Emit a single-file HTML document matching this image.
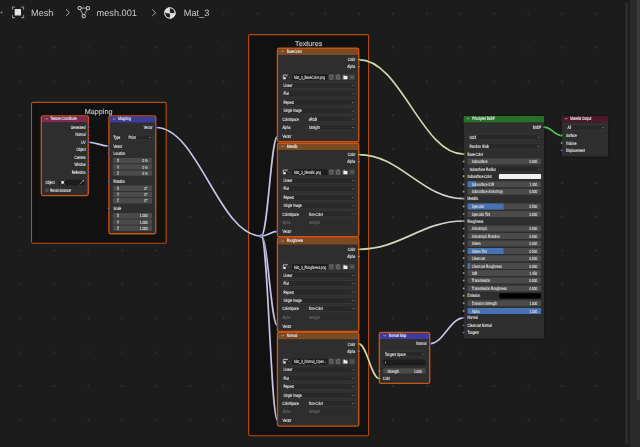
<!DOCTYPE html><html><head><meta charset="utf-8"><style>html,body{margin:0;padding:0;background:#1c1c1c;overflow:hidden}svg{display:block;font-family:"Liberation Sans",sans-serif;text-rendering:geometricPrecision;will-change:transform;filter:blur(0.35px)}</style></head><body><svg width="640" height="447" viewBox="0 0 640 447">
<rect x="0" y="0" width="640" height="447" fill="#1c1c1c"/>
<rect x="19.7" y="12.8" width="2" height="2" fill="#2c2c2c"/>
<rect x="19.7" y="46.64" width="2" height="2" fill="#2c2c2c"/>
<rect x="19.7" y="80.48" width="2" height="2" fill="#2c2c2c"/>
<rect x="19.7" y="114.32" width="2" height="2" fill="#2c2c2c"/>
<rect x="19.7" y="148.16" width="2" height="2" fill="#2c2c2c"/>
<rect x="19.7" y="182" width="2" height="2" fill="#2c2c2c"/>
<rect x="19.7" y="215.84" width="2" height="2" fill="#2c2c2c"/>
<rect x="19.7" y="249.68" width="2" height="2" fill="#2c2c2c"/>
<rect x="19.7" y="283.52" width="2" height="2" fill="#2c2c2c"/>
<rect x="19.7" y="317.36" width="2" height="2" fill="#2c2c2c"/>
<rect x="19.7" y="351.2" width="2" height="2" fill="#2c2c2c"/>
<rect x="19.7" y="385.04" width="2" height="2" fill="#2c2c2c"/>
<rect x="19.7" y="418.88" width="2" height="2" fill="#2c2c2c"/>
<rect x="53.54" y="12.8" width="2" height="2" fill="#2c2c2c"/>
<rect x="53.54" y="46.64" width="2" height="2" fill="#2c2c2c"/>
<rect x="53.54" y="80.48" width="2" height="2" fill="#2c2c2c"/>
<rect x="53.54" y="114.32" width="2" height="2" fill="#2c2c2c"/>
<rect x="53.54" y="148.16" width="2" height="2" fill="#2c2c2c"/>
<rect x="53.54" y="182" width="2" height="2" fill="#2c2c2c"/>
<rect x="53.54" y="215.84" width="2" height="2" fill="#2c2c2c"/>
<rect x="53.54" y="249.68" width="2" height="2" fill="#2c2c2c"/>
<rect x="53.54" y="283.52" width="2" height="2" fill="#2c2c2c"/>
<rect x="53.54" y="317.36" width="2" height="2" fill="#2c2c2c"/>
<rect x="53.54" y="351.2" width="2" height="2" fill="#2c2c2c"/>
<rect x="53.54" y="385.04" width="2" height="2" fill="#2c2c2c"/>
<rect x="53.54" y="418.88" width="2" height="2" fill="#2c2c2c"/>
<rect x="87.38" y="12.8" width="2" height="2" fill="#2c2c2c"/>
<rect x="87.38" y="46.64" width="2" height="2" fill="#2c2c2c"/>
<rect x="87.38" y="80.48" width="2" height="2" fill="#2c2c2c"/>
<rect x="87.38" y="114.32" width="2" height="2" fill="#2c2c2c"/>
<rect x="87.38" y="148.16" width="2" height="2" fill="#2c2c2c"/>
<rect x="87.38" y="182" width="2" height="2" fill="#2c2c2c"/>
<rect x="87.38" y="215.84" width="2" height="2" fill="#2c2c2c"/>
<rect x="87.38" y="249.68" width="2" height="2" fill="#2c2c2c"/>
<rect x="87.38" y="283.52" width="2" height="2" fill="#2c2c2c"/>
<rect x="87.38" y="317.36" width="2" height="2" fill="#2c2c2c"/>
<rect x="87.38" y="351.2" width="2" height="2" fill="#2c2c2c"/>
<rect x="87.38" y="385.04" width="2" height="2" fill="#2c2c2c"/>
<rect x="87.38" y="418.88" width="2" height="2" fill="#2c2c2c"/>
<rect x="121.22" y="12.8" width="2" height="2" fill="#2c2c2c"/>
<rect x="121.22" y="46.64" width="2" height="2" fill="#2c2c2c"/>
<rect x="121.22" y="80.48" width="2" height="2" fill="#2c2c2c"/>
<rect x="121.22" y="114.32" width="2" height="2" fill="#2c2c2c"/>
<rect x="121.22" y="148.16" width="2" height="2" fill="#2c2c2c"/>
<rect x="121.22" y="182" width="2" height="2" fill="#2c2c2c"/>
<rect x="121.22" y="215.84" width="2" height="2" fill="#2c2c2c"/>
<rect x="121.22" y="249.68" width="2" height="2" fill="#2c2c2c"/>
<rect x="121.22" y="283.52" width="2" height="2" fill="#2c2c2c"/>
<rect x="121.22" y="317.36" width="2" height="2" fill="#2c2c2c"/>
<rect x="121.22" y="351.2" width="2" height="2" fill="#2c2c2c"/>
<rect x="121.22" y="385.04" width="2" height="2" fill="#2c2c2c"/>
<rect x="121.22" y="418.88" width="2" height="2" fill="#2c2c2c"/>
<rect x="155.06" y="12.8" width="2" height="2" fill="#2c2c2c"/>
<rect x="155.06" y="46.64" width="2" height="2" fill="#2c2c2c"/>
<rect x="155.06" y="80.48" width="2" height="2" fill="#2c2c2c"/>
<rect x="155.06" y="114.32" width="2" height="2" fill="#2c2c2c"/>
<rect x="155.06" y="148.16" width="2" height="2" fill="#2c2c2c"/>
<rect x="155.06" y="182" width="2" height="2" fill="#2c2c2c"/>
<rect x="155.06" y="215.84" width="2" height="2" fill="#2c2c2c"/>
<rect x="155.06" y="249.68" width="2" height="2" fill="#2c2c2c"/>
<rect x="155.06" y="283.52" width="2" height="2" fill="#2c2c2c"/>
<rect x="155.06" y="317.36" width="2" height="2" fill="#2c2c2c"/>
<rect x="155.06" y="351.2" width="2" height="2" fill="#2c2c2c"/>
<rect x="155.06" y="385.04" width="2" height="2" fill="#2c2c2c"/>
<rect x="155.06" y="418.88" width="2" height="2" fill="#2c2c2c"/>
<rect x="188.9" y="12.8" width="2" height="2" fill="#2c2c2c"/>
<rect x="188.9" y="46.64" width="2" height="2" fill="#2c2c2c"/>
<rect x="188.9" y="80.48" width="2" height="2" fill="#2c2c2c"/>
<rect x="188.9" y="114.32" width="2" height="2" fill="#2c2c2c"/>
<rect x="188.9" y="148.16" width="2" height="2" fill="#2c2c2c"/>
<rect x="188.9" y="182" width="2" height="2" fill="#2c2c2c"/>
<rect x="188.9" y="215.84" width="2" height="2" fill="#2c2c2c"/>
<rect x="188.9" y="249.68" width="2" height="2" fill="#2c2c2c"/>
<rect x="188.9" y="283.52" width="2" height="2" fill="#2c2c2c"/>
<rect x="188.9" y="317.36" width="2" height="2" fill="#2c2c2c"/>
<rect x="188.9" y="351.2" width="2" height="2" fill="#2c2c2c"/>
<rect x="188.9" y="385.04" width="2" height="2" fill="#2c2c2c"/>
<rect x="188.9" y="418.88" width="2" height="2" fill="#2c2c2c"/>
<rect x="222.74" y="12.8" width="2" height="2" fill="#2c2c2c"/>
<rect x="222.74" y="46.64" width="2" height="2" fill="#2c2c2c"/>
<rect x="222.74" y="80.48" width="2" height="2" fill="#2c2c2c"/>
<rect x="222.74" y="114.32" width="2" height="2" fill="#2c2c2c"/>
<rect x="222.74" y="148.16" width="2" height="2" fill="#2c2c2c"/>
<rect x="222.74" y="182" width="2" height="2" fill="#2c2c2c"/>
<rect x="222.74" y="215.84" width="2" height="2" fill="#2c2c2c"/>
<rect x="222.74" y="249.68" width="2" height="2" fill="#2c2c2c"/>
<rect x="222.74" y="283.52" width="2" height="2" fill="#2c2c2c"/>
<rect x="222.74" y="317.36" width="2" height="2" fill="#2c2c2c"/>
<rect x="222.74" y="351.2" width="2" height="2" fill="#2c2c2c"/>
<rect x="222.74" y="385.04" width="2" height="2" fill="#2c2c2c"/>
<rect x="222.74" y="418.88" width="2" height="2" fill="#2c2c2c"/>
<rect x="256.58" y="12.8" width="2" height="2" fill="#2c2c2c"/>
<rect x="256.58" y="46.64" width="2" height="2" fill="#2c2c2c"/>
<rect x="256.58" y="80.48" width="2" height="2" fill="#2c2c2c"/>
<rect x="256.58" y="114.32" width="2" height="2" fill="#2c2c2c"/>
<rect x="256.58" y="148.16" width="2" height="2" fill="#2c2c2c"/>
<rect x="256.58" y="182" width="2" height="2" fill="#2c2c2c"/>
<rect x="256.58" y="215.84" width="2" height="2" fill="#2c2c2c"/>
<rect x="256.58" y="249.68" width="2" height="2" fill="#2c2c2c"/>
<rect x="256.58" y="283.52" width="2" height="2" fill="#2c2c2c"/>
<rect x="256.58" y="317.36" width="2" height="2" fill="#2c2c2c"/>
<rect x="256.58" y="351.2" width="2" height="2" fill="#2c2c2c"/>
<rect x="256.58" y="385.04" width="2" height="2" fill="#2c2c2c"/>
<rect x="256.58" y="418.88" width="2" height="2" fill="#2c2c2c"/>
<rect x="290.42" y="12.8" width="2" height="2" fill="#2c2c2c"/>
<rect x="290.42" y="46.64" width="2" height="2" fill="#2c2c2c"/>
<rect x="290.42" y="80.48" width="2" height="2" fill="#2c2c2c"/>
<rect x="290.42" y="114.32" width="2" height="2" fill="#2c2c2c"/>
<rect x="290.42" y="148.16" width="2" height="2" fill="#2c2c2c"/>
<rect x="290.42" y="182" width="2" height="2" fill="#2c2c2c"/>
<rect x="290.42" y="215.84" width="2" height="2" fill="#2c2c2c"/>
<rect x="290.42" y="249.68" width="2" height="2" fill="#2c2c2c"/>
<rect x="290.42" y="283.52" width="2" height="2" fill="#2c2c2c"/>
<rect x="290.42" y="317.36" width="2" height="2" fill="#2c2c2c"/>
<rect x="290.42" y="351.2" width="2" height="2" fill="#2c2c2c"/>
<rect x="290.42" y="385.04" width="2" height="2" fill="#2c2c2c"/>
<rect x="290.42" y="418.88" width="2" height="2" fill="#2c2c2c"/>
<rect x="324.26" y="12.8" width="2" height="2" fill="#2c2c2c"/>
<rect x="324.26" y="46.64" width="2" height="2" fill="#2c2c2c"/>
<rect x="324.26" y="80.48" width="2" height="2" fill="#2c2c2c"/>
<rect x="324.26" y="114.32" width="2" height="2" fill="#2c2c2c"/>
<rect x="324.26" y="148.16" width="2" height="2" fill="#2c2c2c"/>
<rect x="324.26" y="182" width="2" height="2" fill="#2c2c2c"/>
<rect x="324.26" y="215.84" width="2" height="2" fill="#2c2c2c"/>
<rect x="324.26" y="249.68" width="2" height="2" fill="#2c2c2c"/>
<rect x="324.26" y="283.52" width="2" height="2" fill="#2c2c2c"/>
<rect x="324.26" y="317.36" width="2" height="2" fill="#2c2c2c"/>
<rect x="324.26" y="351.2" width="2" height="2" fill="#2c2c2c"/>
<rect x="324.26" y="385.04" width="2" height="2" fill="#2c2c2c"/>
<rect x="324.26" y="418.88" width="2" height="2" fill="#2c2c2c"/>
<rect x="358.1" y="12.8" width="2" height="2" fill="#2c2c2c"/>
<rect x="358.1" y="46.64" width="2" height="2" fill="#2c2c2c"/>
<rect x="358.1" y="80.48" width="2" height="2" fill="#2c2c2c"/>
<rect x="358.1" y="114.32" width="2" height="2" fill="#2c2c2c"/>
<rect x="358.1" y="148.16" width="2" height="2" fill="#2c2c2c"/>
<rect x="358.1" y="182" width="2" height="2" fill="#2c2c2c"/>
<rect x="358.1" y="215.84" width="2" height="2" fill="#2c2c2c"/>
<rect x="358.1" y="249.68" width="2" height="2" fill="#2c2c2c"/>
<rect x="358.1" y="283.52" width="2" height="2" fill="#2c2c2c"/>
<rect x="358.1" y="317.36" width="2" height="2" fill="#2c2c2c"/>
<rect x="358.1" y="351.2" width="2" height="2" fill="#2c2c2c"/>
<rect x="358.1" y="385.04" width="2" height="2" fill="#2c2c2c"/>
<rect x="358.1" y="418.88" width="2" height="2" fill="#2c2c2c"/>
<rect x="391.94" y="12.8" width="2" height="2" fill="#2c2c2c"/>
<rect x="391.94" y="46.64" width="2" height="2" fill="#2c2c2c"/>
<rect x="391.94" y="80.48" width="2" height="2" fill="#2c2c2c"/>
<rect x="391.94" y="114.32" width="2" height="2" fill="#2c2c2c"/>
<rect x="391.94" y="148.16" width="2" height="2" fill="#2c2c2c"/>
<rect x="391.94" y="182" width="2" height="2" fill="#2c2c2c"/>
<rect x="391.94" y="215.84" width="2" height="2" fill="#2c2c2c"/>
<rect x="391.94" y="249.68" width="2" height="2" fill="#2c2c2c"/>
<rect x="391.94" y="283.52" width="2" height="2" fill="#2c2c2c"/>
<rect x="391.94" y="317.36" width="2" height="2" fill="#2c2c2c"/>
<rect x="391.94" y="351.2" width="2" height="2" fill="#2c2c2c"/>
<rect x="391.94" y="385.04" width="2" height="2" fill="#2c2c2c"/>
<rect x="391.94" y="418.88" width="2" height="2" fill="#2c2c2c"/>
<rect x="425.78" y="12.8" width="2" height="2" fill="#2c2c2c"/>
<rect x="425.78" y="46.64" width="2" height="2" fill="#2c2c2c"/>
<rect x="425.78" y="80.48" width="2" height="2" fill="#2c2c2c"/>
<rect x="425.78" y="114.32" width="2" height="2" fill="#2c2c2c"/>
<rect x="425.78" y="148.16" width="2" height="2" fill="#2c2c2c"/>
<rect x="425.78" y="182" width="2" height="2" fill="#2c2c2c"/>
<rect x="425.78" y="215.84" width="2" height="2" fill="#2c2c2c"/>
<rect x="425.78" y="249.68" width="2" height="2" fill="#2c2c2c"/>
<rect x="425.78" y="283.52" width="2" height="2" fill="#2c2c2c"/>
<rect x="425.78" y="317.36" width="2" height="2" fill="#2c2c2c"/>
<rect x="425.78" y="351.2" width="2" height="2" fill="#2c2c2c"/>
<rect x="425.78" y="385.04" width="2" height="2" fill="#2c2c2c"/>
<rect x="425.78" y="418.88" width="2" height="2" fill="#2c2c2c"/>
<rect x="459.62" y="12.8" width="2" height="2" fill="#2c2c2c"/>
<rect x="459.62" y="46.64" width="2" height="2" fill="#2c2c2c"/>
<rect x="459.62" y="80.48" width="2" height="2" fill="#2c2c2c"/>
<rect x="459.62" y="114.32" width="2" height="2" fill="#2c2c2c"/>
<rect x="459.62" y="148.16" width="2" height="2" fill="#2c2c2c"/>
<rect x="459.62" y="182" width="2" height="2" fill="#2c2c2c"/>
<rect x="459.62" y="215.84" width="2" height="2" fill="#2c2c2c"/>
<rect x="459.62" y="249.68" width="2" height="2" fill="#2c2c2c"/>
<rect x="459.62" y="283.52" width="2" height="2" fill="#2c2c2c"/>
<rect x="459.62" y="317.36" width="2" height="2" fill="#2c2c2c"/>
<rect x="459.62" y="351.2" width="2" height="2" fill="#2c2c2c"/>
<rect x="459.62" y="385.04" width="2" height="2" fill="#2c2c2c"/>
<rect x="459.62" y="418.88" width="2" height="2" fill="#2c2c2c"/>
<rect x="493.46" y="12.8" width="2" height="2" fill="#2c2c2c"/>
<rect x="493.46" y="46.64" width="2" height="2" fill="#2c2c2c"/>
<rect x="493.46" y="80.48" width="2" height="2" fill="#2c2c2c"/>
<rect x="493.46" y="114.32" width="2" height="2" fill="#2c2c2c"/>
<rect x="493.46" y="148.16" width="2" height="2" fill="#2c2c2c"/>
<rect x="493.46" y="182" width="2" height="2" fill="#2c2c2c"/>
<rect x="493.46" y="215.84" width="2" height="2" fill="#2c2c2c"/>
<rect x="493.46" y="249.68" width="2" height="2" fill="#2c2c2c"/>
<rect x="493.46" y="283.52" width="2" height="2" fill="#2c2c2c"/>
<rect x="493.46" y="317.36" width="2" height="2" fill="#2c2c2c"/>
<rect x="493.46" y="351.2" width="2" height="2" fill="#2c2c2c"/>
<rect x="493.46" y="385.04" width="2" height="2" fill="#2c2c2c"/>
<rect x="493.46" y="418.88" width="2" height="2" fill="#2c2c2c"/>
<rect x="527.3" y="12.8" width="2" height="2" fill="#2c2c2c"/>
<rect x="527.3" y="46.64" width="2" height="2" fill="#2c2c2c"/>
<rect x="527.3" y="80.48" width="2" height="2" fill="#2c2c2c"/>
<rect x="527.3" y="114.32" width="2" height="2" fill="#2c2c2c"/>
<rect x="527.3" y="148.16" width="2" height="2" fill="#2c2c2c"/>
<rect x="527.3" y="182" width="2" height="2" fill="#2c2c2c"/>
<rect x="527.3" y="215.84" width="2" height="2" fill="#2c2c2c"/>
<rect x="527.3" y="249.68" width="2" height="2" fill="#2c2c2c"/>
<rect x="527.3" y="283.52" width="2" height="2" fill="#2c2c2c"/>
<rect x="527.3" y="317.36" width="2" height="2" fill="#2c2c2c"/>
<rect x="527.3" y="351.2" width="2" height="2" fill="#2c2c2c"/>
<rect x="527.3" y="385.04" width="2" height="2" fill="#2c2c2c"/>
<rect x="527.3" y="418.88" width="2" height="2" fill="#2c2c2c"/>
<rect x="561.14" y="12.8" width="2" height="2" fill="#2c2c2c"/>
<rect x="561.14" y="46.64" width="2" height="2" fill="#2c2c2c"/>
<rect x="561.14" y="80.48" width="2" height="2" fill="#2c2c2c"/>
<rect x="561.14" y="114.32" width="2" height="2" fill="#2c2c2c"/>
<rect x="561.14" y="148.16" width="2" height="2" fill="#2c2c2c"/>
<rect x="561.14" y="182" width="2" height="2" fill="#2c2c2c"/>
<rect x="561.14" y="215.84" width="2" height="2" fill="#2c2c2c"/>
<rect x="561.14" y="249.68" width="2" height="2" fill="#2c2c2c"/>
<rect x="561.14" y="283.52" width="2" height="2" fill="#2c2c2c"/>
<rect x="561.14" y="317.36" width="2" height="2" fill="#2c2c2c"/>
<rect x="561.14" y="351.2" width="2" height="2" fill="#2c2c2c"/>
<rect x="561.14" y="385.04" width="2" height="2" fill="#2c2c2c"/>
<rect x="561.14" y="418.88" width="2" height="2" fill="#2c2c2c"/>
<rect x="594.98" y="12.8" width="2" height="2" fill="#2c2c2c"/>
<rect x="594.98" y="46.64" width="2" height="2" fill="#2c2c2c"/>
<rect x="594.98" y="80.48" width="2" height="2" fill="#2c2c2c"/>
<rect x="594.98" y="114.32" width="2" height="2" fill="#2c2c2c"/>
<rect x="594.98" y="148.16" width="2" height="2" fill="#2c2c2c"/>
<rect x="594.98" y="182" width="2" height="2" fill="#2c2c2c"/>
<rect x="594.98" y="215.84" width="2" height="2" fill="#2c2c2c"/>
<rect x="594.98" y="249.68" width="2" height="2" fill="#2c2c2c"/>
<rect x="594.98" y="283.52" width="2" height="2" fill="#2c2c2c"/>
<rect x="594.98" y="317.36" width="2" height="2" fill="#2c2c2c"/>
<rect x="594.98" y="351.2" width="2" height="2" fill="#2c2c2c"/>
<rect x="594.98" y="385.04" width="2" height="2" fill="#2c2c2c"/>
<rect x="594.98" y="418.88" width="2" height="2" fill="#2c2c2c"/>
<rect x="629.8" y="0" width="10.2" height="447" fill="#2a2a2a"/>
<rect x="625.2" y="2" width="3" height="442.5" fill="#2c2c2c" rx="1.5"/>
<rect x="636.8" y="0" width="3.2" height="400" fill="#3a3a3a" rx="1"/>
<circle cx="1.5" cy="12.5" r="1" fill="#888"/>
<g fill="none" stroke="#8c8c8c" stroke-width="1.1" stroke-linecap="round"><path d="M12.5 9.3 V7 H14.6 M21.5 7 H23.6 V9.3 M23.6 15.2 V17.6 H21.5 M14.6 17.6 H12.5 V15.2"/></g>
<rect x="14.7" y="9" width="6.3" height="6.5" fill="#e2e2e2" rx="0.5"/>
<text transform="translate(31 16) scale(1 1)" font-size="9.2" fill="#cccccc" text-anchor="start">Mesh</text>
<path d="M66 9.4 l3.4 3.3 l-3.4 3.3" fill="none" stroke="#b0b0b0" stroke-width="0.9"/>
<g fill="none" stroke="#c8c8c8" stroke-width="0.8"><path d="M79.6 8.1 H87.9 L83.7 16.2 Z"/></g>
<rect x="78.1" y="6.6" width="3" height="3" rx="0.6" fill="#1e1e1e" stroke="#e0e0e0" stroke-width="0.9"/>
<rect x="86.4" y="6.6" width="3" height="3" rx="0.6" fill="#1e1e1e" stroke="#e0e0e0" stroke-width="0.9"/>
<rect x="82.2" y="14.7" width="3" height="3" rx="0.6" fill="#1e1e1e" stroke="#e0e0e0" stroke-width="0.9"/>
<text transform="translate(96.6 16) scale(1 1)" font-size="9.2" fill="#cccccc" text-anchor="start">mesh.001</text>
<path d="M152.2 9.4 l3.4 3.3 l-3.4 3.3" fill="none" stroke="#b0b0b0" stroke-width="0.9"/>
<circle cx="169.9" cy="13" r="5.7" fill="#e0e0e0"/>
<path d="M169.9 12.6 V7.3 A5.7 5.7 0 0 1 175.5 12.2 Q172.5 14.3 169.9 12.6 Z" fill="#1e1e1e"/>
<path d="M169.9 13.6 V18.7 A5.7 5.7 0 0 1 164.4 12 Q167 13.8 169.9 13.6 Z" fill="#1e1e1e"/>
<circle cx="169.9" cy="13" r="5.2" fill="none" stroke="#e0e0e0" stroke-width="1"/>
<text transform="translate(183.8 16) scale(1 1)" font-size="9.2" fill="#cccccc" text-anchor="start">Mat_3</text>
<rect x="31.5" y="102.4" width="134.7" height="140.8" fill="#111111" rx="1.5" stroke="#b84c0c" stroke-width="1.1"/>
<text transform="translate(98.6 113.9) scale(1 1)" font-size="7.2" fill="#b8b8b8" text-anchor="middle" stroke="#b8b8b8" stroke-width="0.22">Mapping</text>
<rect x="248.6" y="34.6" width="120" height="401.2" fill="#111111" rx="1.5" stroke="#b84c0c" stroke-width="1.1"/>
<text transform="translate(308.7 46.3) scale(1 1)" font-size="7.2" fill="#b8b8b8" text-anchor="middle" stroke="#b8b8b8" stroke-width="0.22">Textures</text>
<rect x="40.65" y="115.15" width="48.3" height="81.1" fill="#cc540f" rx="2.4"/>
<rect x="42" y="116.5" width="45.6" height="78.4" fill="#2e2e2e" rx="1.2"/>
<path d="M43.2 116.5 h43.2 a1.2 1.2 0 0 1 1.2 1.2 V122.3 H42 V117.7 a1.2 1.2 0 0 1 1.2 -1.2z" fill="#7e2a52"/>
<path d="M45.4 118.2 l1.2 1.3 l1.2 -1.3" fill="none" stroke="#d8d8d8" stroke-width="0.55"/>
<text transform="translate(50.6 120.15) scale(0.67 1)" font-size="4.6" fill="#ececec" text-anchor="start" stroke="#ececec" stroke-width="0.14">Texture Coordinate</text>
<text transform="translate(85.6 128.95) scale(0.68 1)" font-size="4.6" fill="#e2e2e2" text-anchor="end" stroke="#e2e2e2" stroke-width="0.14">Generated</text>
<text transform="translate(85.6 136.42) scale(0.68 1)" font-size="4.6" fill="#e2e2e2" text-anchor="end" stroke="#e2e2e2" stroke-width="0.14">Normal</text>
<text transform="translate(85.6 143.89) scale(0.68 1)" font-size="4.6" fill="#e2e2e2" text-anchor="end" stroke="#e2e2e2" stroke-width="0.14">UV</text>
<text transform="translate(85.6 151.36) scale(0.68 1)" font-size="4.6" fill="#e2e2e2" text-anchor="end" stroke="#e2e2e2" stroke-width="0.14">Object</text>
<text transform="translate(85.6 158.83) scale(0.68 1)" font-size="4.6" fill="#e2e2e2" text-anchor="end" stroke="#e2e2e2" stroke-width="0.14">Camera</text>
<text transform="translate(85.6 166.3) scale(0.68 1)" font-size="4.6" fill="#e2e2e2" text-anchor="end" stroke="#e2e2e2" stroke-width="0.14">Window</text>
<text transform="translate(85.6 173.77) scale(0.68 1)" font-size="4.6" fill="#e2e2e2" text-anchor="end" stroke="#e2e2e2" stroke-width="0.14">Reflection</text>
<text transform="translate(45.5 183.95) scale(0.68 1)" font-size="4.6" fill="#e2e2e2" text-anchor="start" stroke="#e2e2e2" stroke-width="0.14">Object</text>
<rect x="58.8" y="179.7" width="26.1" height="5.5" fill="#1c1c1c" rx="1"/>
<path d="M60.6 181.2 v-0.8 h0.8 M63.8 180.4 h0.8 v0.8 M64.6 183.6 v0.8 h-0.8 M61.4 184.4 h-0.8 v-0.8" fill="none" stroke="#bbb" stroke-width="0.4"/>
<rect x="61.3" y="181.1" width="2.6" height="2.6" fill="#e8e8e8" rx="0.3"/>
<path d="M79.6 184.3 l3.2 -3.2" stroke="#c8c8c8" stroke-width="0.6"/>
<path d="M82.2 180.4 l1.4 1.4 l0.6 -1.6z" fill="#d8d8d8"/>
<rect x="45.2" y="188.4" width="3.4" height="3.6" fill="#4a4a4a" rx="0.5"/>
<text transform="translate(50.2 191.85) scale(0.58 1)" font-size="4.6" fill="#e2e2e2" text-anchor="start" stroke="#e2e2e2" stroke-width="0.14">Remain Instancer</text>
<rect x="108.25" y="115.15" width="48.2" height="119.3" fill="#cc540f" rx="2.4"/>
<rect x="109.6" y="116.5" width="45.5" height="116.6" fill="#2e2e2e" rx="1.2"/>
<path d="M110.8 116.5 h43.1 a1.2 1.2 0 0 1 1.2 1.2 V122.5 H109.6 V117.7 a1.2 1.2 0 0 1 1.2 -1.2z" fill="#3f3b98"/>
<path d="M113 118.3 l1.2 1.3 l1.2 -1.3" fill="none" stroke="#d8d8d8" stroke-width="0.55"/>
<text transform="translate(118.2 120.25) scale(0.71 1)" font-size="4.6" fill="#ececec" text-anchor="start" stroke="#ececec" stroke-width="0.14">Mapping</text>
<text transform="translate(152.5 129.15) scale(0.68 1)" font-size="4.6" fill="#e2e2e2" text-anchor="end" stroke="#e2e2e2" stroke-width="0.14">Vector</text>
<text transform="translate(113.4 139.05) scale(0.68 1)" font-size="4.6" fill="#e2e2e2" text-anchor="start" stroke="#e2e2e2" stroke-width="0.14">Type</text>
<rect x="126.6" y="134.8" width="25.9" height="5.4" fill="#282828" rx="1" stroke="#474747" stroke-width="0.4"/>
<text transform="translate(128.4 139.15) scale(0.68 1)" font-size="4.6" fill="#e0e0e0" text-anchor="start" stroke="#e0e0e0" stroke-width="0.14">Point</text>
<path d="M149.2 137.2 l0.8 0.8 l0.8 -0.8" fill="none" stroke="#e0e0e0" stroke-width="0.4"/>
<text transform="translate(113.4 147.65) scale(0.68 1)" font-size="4.6" fill="#e2e2e2" text-anchor="start" stroke="#e2e2e2" stroke-width="0.14">Vector</text>
<text transform="translate(113.4 154.85) scale(0.68 1)" font-size="4.6" fill="#e2e2e2" text-anchor="start" stroke="#e2e2e2" stroke-width="0.14">Location</text>
<rect x="112.8" y="157.9" width="39.4" height="5.4" fill="#4a4a4a" rx="0.8"/>
<text transform="translate(117 162.25) scale(0.68 1)" font-size="4.6" fill="#d8d8d8" text-anchor="start" stroke="#d8d8d8" stroke-width="0.14">X</text>
<text transform="translate(147.6 162.25) scale(0.68 1)" font-size="4.6" fill="#d8d8d8" text-anchor="end" stroke="#d8d8d8" stroke-width="0.14">0 m</text>
<rect x="112.8" y="164.15" width="39.4" height="5.4" fill="#4a4a4a"/>
<text transform="translate(117 168.5) scale(0.68 1)" font-size="4.6" fill="#d8d8d8" text-anchor="start" stroke="#d8d8d8" stroke-width="0.14">Y</text>
<text transform="translate(147.6 168.5) scale(0.68 1)" font-size="4.6" fill="#d8d8d8" text-anchor="end" stroke="#d8d8d8" stroke-width="0.14">0 m</text>
<rect x="112.8" y="170.4" width="39.4" height="5.4" fill="#4a4a4a" rx="0.8"/>
<text transform="translate(117 174.75) scale(0.68 1)" font-size="4.6" fill="#d8d8d8" text-anchor="start" stroke="#d8d8d8" stroke-width="0.14">Z</text>
<text transform="translate(147.6 174.75) scale(0.68 1)" font-size="4.6" fill="#d8d8d8" text-anchor="end" stroke="#d8d8d8" stroke-width="0.14">0 m</text>
<text transform="translate(113.4 182.65) scale(0.68 1)" font-size="4.6" fill="#e2e2e2" text-anchor="start" stroke="#e2e2e2" stroke-width="0.14">Rotation</text>
<rect x="112.8" y="185.6" width="39.4" height="5.4" fill="#4a4a4a" rx="0.8"/>
<text transform="translate(117 189.95) scale(0.68 1)" font-size="4.6" fill="#d8d8d8" text-anchor="start" stroke="#d8d8d8" stroke-width="0.14">X</text>
<text transform="translate(147.6 189.95) scale(0.68 1)" font-size="4.6" fill="#d8d8d8" text-anchor="end" stroke="#d8d8d8" stroke-width="0.14">0°</text>
<rect x="112.8" y="191.85" width="39.4" height="5.4" fill="#4a4a4a"/>
<text transform="translate(117 196.2) scale(0.68 1)" font-size="4.6" fill="#d8d8d8" text-anchor="start" stroke="#d8d8d8" stroke-width="0.14">Y</text>
<text transform="translate(147.6 196.2) scale(0.68 1)" font-size="4.6" fill="#d8d8d8" text-anchor="end" stroke="#d8d8d8" stroke-width="0.14">0°</text>
<rect x="112.8" y="198.1" width="39.4" height="5.4" fill="#4a4a4a" rx="0.8"/>
<text transform="translate(117 202.45) scale(0.68 1)" font-size="4.6" fill="#d8d8d8" text-anchor="start" stroke="#d8d8d8" stroke-width="0.14">Z</text>
<text transform="translate(147.6 202.45) scale(0.68 1)" font-size="4.6" fill="#d8d8d8" text-anchor="end" stroke="#d8d8d8" stroke-width="0.14">0°</text>
<text transform="translate(113.4 210.25) scale(0.68 1)" font-size="4.6" fill="#e2e2e2" text-anchor="start" stroke="#e2e2e2" stroke-width="0.14">Scale</text>
<rect x="112.8" y="213.1" width="39.4" height="5.4" fill="#4a4a4a" rx="0.8"/>
<text transform="translate(117 217.45) scale(0.68 1)" font-size="4.6" fill="#d8d8d8" text-anchor="start" stroke="#d8d8d8" stroke-width="0.14">X</text>
<text transform="translate(147.6 217.45) scale(0.68 1)" font-size="4.6" fill="#d8d8d8" text-anchor="end" stroke="#d8d8d8" stroke-width="0.14">1.000</text>
<rect x="112.8" y="219.35" width="39.4" height="5.4" fill="#4a4a4a"/>
<text transform="translate(117 223.7) scale(0.68 1)" font-size="4.6" fill="#d8d8d8" text-anchor="start" stroke="#d8d8d8" stroke-width="0.14">Y</text>
<text transform="translate(147.6 223.7) scale(0.68 1)" font-size="4.6" fill="#d8d8d8" text-anchor="end" stroke="#d8d8d8" stroke-width="0.14">1.000</text>
<rect x="112.8" y="225.6" width="39.4" height="5.4" fill="#4a4a4a" rx="0.8"/>
<text transform="translate(117 229.95) scale(0.68 1)" font-size="4.6" fill="#d8d8d8" text-anchor="start" stroke="#d8d8d8" stroke-width="0.14">Z</text>
<text transform="translate(147.6 229.95) scale(0.68 1)" font-size="4.6" fill="#d8d8d8" text-anchor="end" stroke="#d8d8d8" stroke-width="0.14">1.000</text>
<rect x="276.75" y="47.55" width="82.65" height="94.9" fill="#cc540f" rx="2.4"/>
<rect x="278.1" y="48.9" width="79.95" height="92.2" fill="#2e2e2e" rx="1.2"/>
<path d="M279.3 48.9 h77.55 a1.2 1.2 0 0 1 1.2 1.2 V54.9 H278.1 V50.1 a1.2 1.2 0 0 1 1.2 -1.2z" fill="#7a4a22"/>
<path d="M281.5 50.7 l1.2 1.3 l1.2 -1.3" fill="none" stroke="#d8d8d8" stroke-width="0.55"/>
<text transform="translate(286.7 52.65) scale(0.71 1)" font-size="4.6" fill="#ececec" text-anchor="start" stroke="#ececec" stroke-width="0.14">BaseColor</text>
<text transform="translate(355.25 61.25) scale(0.68 1)" font-size="4.6" fill="#e2e2e2" text-anchor="end" stroke="#e2e2e2" stroke-width="0.14">Color</text>
<text transform="translate(355.25 68.45) scale(0.68 1)" font-size="4.6" fill="#e2e2e2" text-anchor="end" stroke="#e2e2e2" stroke-width="0.14">Alpha</text>
<rect x="281.8" y="74.2" width="9.6" height="5.9" fill="#282828" rx="1" stroke="#474747" stroke-width="0.4"/>
<path d="M283.3 75.1 V79.2 M283.3 75.1 H287.9" fill="none" stroke="#d8d8d8" stroke-width="0.8"/>
<path d="M283.6 79.3 h2.2 v-1.2 a1 1 0 0 0 -2.2 0z" fill="#e8e8e8"/>
<circle cx="286.2" cy="76.5" r="0.45" fill="#bbb"/>
<path d="M288.4 76.8 l0.8 0.8 l0.8 -0.8" fill="none" stroke="#c8c8c8" stroke-width="0.4"/>
<rect x="292.2" y="74.2" width="35.4" height="5.9" fill="#1c1c1c" rx="0.8"/>
<text transform="translate(294 78.8) scale(0.68 1)" font-size="4.6" fill="#dcdcdc" text-anchor="start" stroke="#dcdcdc" stroke-width="0.14">Mat_3_BaseColor.png</text>
<rect x="328.4" y="74.2" width="5.9" height="5.9" fill="#444444" rx="0.6"/>
<rect x="335" y="74.2" width="5.9" height="5.9" fill="#444444" rx="0.6"/>
<rect x="342" y="74.2" width="5.9" height="5.9" fill="#444444" rx="0.6"/>
<rect x="349" y="74.2" width="5.9" height="5.9" fill="#444444" rx="0.6"/>
<path d="M330 75.4 h2.8 v1.8 q0 1.6 -1.4 2.2 q-1.4 -0.6 -1.4 -2.2z" fill="none" stroke="#a8a8a8" stroke-width="0.45"/>
<path d="M336.7 75.7 v3.3 h2.6 v-2.4 l-0.9 -0.9z M337.4 75.1 q1 -0.8 2.2 0.2" fill="none" stroke="#a8a8a8" stroke-width="0.45"/>
<path d="M343.4 75.5 h1.6 l0.5 0.6 h2 v3.1 h-4.1z" fill="#eeeeee"/>
<path d="M350.9 76.05 l2.2 2.2 M353.1 76.05 l-2.2 2.2" stroke="#9a9a9a" stroke-width="0.45"/>
<rect x="281.8" y="82.4" width="73.4" height="6" fill="#282828" rx="1" stroke="#474747" stroke-width="0.4"/>
<text transform="translate(283.6 87.05) scale(0.68 1)" font-size="4.6" fill="#e0e0e0" text-anchor="start" stroke="#e0e0e0" stroke-width="0.14">Linear</text>
<path d="M351.9 85.1 l0.8 0.8 l0.8 -0.8" fill="none" stroke="#e0e0e0" stroke-width="0.4"/>
<rect x="281.8" y="90.8" width="73.4" height="6" fill="#282828" rx="1" stroke="#474747" stroke-width="0.4"/>
<text transform="translate(283.6 95.45) scale(0.68 1)" font-size="4.6" fill="#e0e0e0" text-anchor="start" stroke="#e0e0e0" stroke-width="0.14">Flat</text>
<path d="M351.9 93.5 l0.8 0.8 l0.8 -0.8" fill="none" stroke="#e0e0e0" stroke-width="0.4"/>
<rect x="281.8" y="99.3" width="73.4" height="6" fill="#282828" rx="1" stroke="#474747" stroke-width="0.4"/>
<text transform="translate(283.6 103.95) scale(0.68 1)" font-size="4.6" fill="#e0e0e0" text-anchor="start" stroke="#e0e0e0" stroke-width="0.14">Repeat</text>
<path d="M351.9 102 l0.8 0.8 l0.8 -0.8" fill="none" stroke="#e0e0e0" stroke-width="0.4"/>
<rect x="281.8" y="107.8" width="73.4" height="6" fill="#282828" rx="1" stroke="#474747" stroke-width="0.4"/>
<text transform="translate(283.6 112.45) scale(0.68 1)" font-size="4.6" fill="#e0e0e0" text-anchor="start" stroke="#e0e0e0" stroke-width="0.14">Single Image</text>
<path d="M351.9 110.5 l0.8 0.8 l0.8 -0.8" fill="none" stroke="#e0e0e0" stroke-width="0.4"/>
<text transform="translate(282.5 120.55) scale(0.68 1)" font-size="4.6" fill="#e2e2e2" text-anchor="start" stroke="#e2e2e2" stroke-width="0.14">ColorSpace</text>
<rect x="307" y="115.9" width="48.2" height="6" fill="#282828" rx="1" stroke="#474747" stroke-width="0.4"/>
<text transform="translate(308.8 120.55) scale(0.68 1)" font-size="4.6" fill="#e0e0e0" text-anchor="start" stroke="#e0e0e0" stroke-width="0.14">sRGB</text>
<path d="M351.9 118.6 l0.8 0.8 l0.8 -0.8" fill="none" stroke="#e0e0e0" stroke-width="0.4"/>
<text transform="translate(282.5 129.15) scale(0.68 1)" font-size="4.6" fill="#e2e2e2" text-anchor="start" stroke="#e2e2e2" stroke-width="0.14">Alpha</text>
<rect x="307" y="124.5" width="48.2" height="6" fill="#282828" rx="1" stroke="#474747" stroke-width="0.4"/>
<text transform="translate(308.8 129.15) scale(0.68 1)" font-size="4.6" fill="#e0e0e0" text-anchor="start" stroke="#e0e0e0" stroke-width="0.14">Straight</text>
<path d="M351.9 127.2 l0.8 0.8 l0.8 -0.8" fill="none" stroke="#e0e0e0" stroke-width="0.4"/>
<text transform="translate(282.5 137.95) scale(0.68 1)" font-size="4.6" fill="#e2e2e2" text-anchor="start" stroke="#e2e2e2" stroke-width="0.14">Vector</text>
<rect x="276.75" y="142.55" width="82.65" height="94.9" fill="#cc540f" rx="2.4"/>
<rect x="278.1" y="143.9" width="79.95" height="92.2" fill="#2e2e2e" rx="1.2"/>
<path d="M279.3 143.9 h77.55 a1.2 1.2 0 0 1 1.2 1.2 V149.9 H278.1 V145.1 a1.2 1.2 0 0 1 1.2 -1.2z" fill="#7a4a22"/>
<path d="M281.5 145.7 l1.2 1.3 l1.2 -1.3" fill="none" stroke="#d8d8d8" stroke-width="0.55"/>
<text transform="translate(286.7 147.65) scale(0.71 1)" font-size="4.6" fill="#ececec" text-anchor="start" stroke="#ececec" stroke-width="0.14">Metallic</text>
<text transform="translate(355.25 156.25) scale(0.68 1)" font-size="4.6" fill="#e2e2e2" text-anchor="end" stroke="#e2e2e2" stroke-width="0.14">Color</text>
<text transform="translate(355.25 163.45) scale(0.68 1)" font-size="4.6" fill="#e2e2e2" text-anchor="end" stroke="#e2e2e2" stroke-width="0.14">Alpha</text>
<rect x="281.8" y="169.2" width="9.6" height="5.9" fill="#282828" rx="1" stroke="#474747" stroke-width="0.4"/>
<path d="M283.3 170.1 V174.2 M283.3 170.1 H287.9" fill="none" stroke="#d8d8d8" stroke-width="0.8"/>
<path d="M283.6 174.3 h2.2 v-1.2 a1 1 0 0 0 -2.2 0z" fill="#e8e8e8"/>
<circle cx="286.2" cy="171.5" r="0.45" fill="#bbb"/>
<path d="M288.4 171.8 l0.8 0.8 l0.8 -0.8" fill="none" stroke="#c8c8c8" stroke-width="0.4"/>
<rect x="292.2" y="169.2" width="35.4" height="5.9" fill="#1c1c1c" rx="0.8"/>
<text transform="translate(294 173.8) scale(0.68 1)" font-size="4.6" fill="#dcdcdc" text-anchor="start" stroke="#dcdcdc" stroke-width="0.14">Mat_3_Metallic.png</text>
<rect x="328.4" y="169.2" width="5.9" height="5.9" fill="#444444" rx="0.6"/>
<rect x="335" y="169.2" width="5.9" height="5.9" fill="#444444" rx="0.6"/>
<rect x="342" y="169.2" width="5.9" height="5.9" fill="#444444" rx="0.6"/>
<rect x="349" y="169.2" width="5.9" height="5.9" fill="#444444" rx="0.6"/>
<path d="M330 170.4 h2.8 v1.8 q0 1.6 -1.4 2.2 q-1.4 -0.6 -1.4 -2.2z" fill="none" stroke="#a8a8a8" stroke-width="0.45"/>
<path d="M336.7 170.7 v3.3 h2.6 v-2.4 l-0.9 -0.9z M337.4 170.1 q1 -0.8 2.2 0.2" fill="none" stroke="#a8a8a8" stroke-width="0.45"/>
<path d="M343.4 170.5 h1.6 l0.5 0.6 h2 v3.1 h-4.1z" fill="#eeeeee"/>
<path d="M350.9 171.05 l2.2 2.2 M353.1 171.05 l-2.2 2.2" stroke="#9a9a9a" stroke-width="0.45"/>
<rect x="281.8" y="177.4" width="73.4" height="6" fill="#282828" rx="1" stroke="#474747" stroke-width="0.4"/>
<text transform="translate(283.6 182.05) scale(0.68 1)" font-size="4.6" fill="#e0e0e0" text-anchor="start" stroke="#e0e0e0" stroke-width="0.14">Linear</text>
<path d="M351.9 180.1 l0.8 0.8 l0.8 -0.8" fill="none" stroke="#e0e0e0" stroke-width="0.4"/>
<rect x="281.8" y="185.8" width="73.4" height="6" fill="#282828" rx="1" stroke="#474747" stroke-width="0.4"/>
<text transform="translate(283.6 190.45) scale(0.68 1)" font-size="4.6" fill="#e0e0e0" text-anchor="start" stroke="#e0e0e0" stroke-width="0.14">Flat</text>
<path d="M351.9 188.5 l0.8 0.8 l0.8 -0.8" fill="none" stroke="#e0e0e0" stroke-width="0.4"/>
<rect x="281.8" y="194.3" width="73.4" height="6" fill="#282828" rx="1" stroke="#474747" stroke-width="0.4"/>
<text transform="translate(283.6 198.95) scale(0.68 1)" font-size="4.6" fill="#e0e0e0" text-anchor="start" stroke="#e0e0e0" stroke-width="0.14">Repeat</text>
<path d="M351.9 197 l0.8 0.8 l0.8 -0.8" fill="none" stroke="#e0e0e0" stroke-width="0.4"/>
<rect x="281.8" y="202.8" width="73.4" height="6" fill="#282828" rx="1" stroke="#474747" stroke-width="0.4"/>
<text transform="translate(283.6 207.45) scale(0.68 1)" font-size="4.6" fill="#e0e0e0" text-anchor="start" stroke="#e0e0e0" stroke-width="0.14">Single Image</text>
<path d="M351.9 205.5 l0.8 0.8 l0.8 -0.8" fill="none" stroke="#e0e0e0" stroke-width="0.4"/>
<text transform="translate(282.5 215.55) scale(0.68 1)" font-size="4.6" fill="#e2e2e2" text-anchor="start" stroke="#e2e2e2" stroke-width="0.14">ColorSpace</text>
<rect x="307" y="210.9" width="48.2" height="6" fill="#282828" rx="1" stroke="#474747" stroke-width="0.4"/>
<text transform="translate(308.8 215.55) scale(0.68 1)" font-size="4.6" fill="#e0e0e0" text-anchor="start" stroke="#e0e0e0" stroke-width="0.14">Non-Color</text>
<path d="M351.9 213.6 l0.8 0.8 l0.8 -0.8" fill="none" stroke="#e0e0e0" stroke-width="0.4"/>
<text transform="translate(282.5 224.15) scale(0.68 1)" font-size="4.6" fill="#6a6a6a" text-anchor="start" stroke="#6a6a6a" stroke-width="0.14">Alpha</text>
<rect x="307" y="219.5" width="48.2" height="6" fill="#2b2b2b" rx="1" stroke="#363636" stroke-width="0.4"/>
<text transform="translate(308.8 224.15) scale(0.68 1)" font-size="4.6" fill="#6a6a6a" text-anchor="start" stroke="#6a6a6a" stroke-width="0.14">Straight</text>
<path d="M351.9 222.2 l0.8 0.8 l0.8 -0.8" fill="none" stroke="#6a6a6a" stroke-width="0.4"/>
<text transform="translate(282.5 232.95) scale(0.68 1)" font-size="4.6" fill="#e2e2e2" text-anchor="start" stroke="#e2e2e2" stroke-width="0.14">Vector</text>
<rect x="276.75" y="237.25" width="82.65" height="94.9" fill="#cc540f" rx="2.4"/>
<rect x="278.1" y="238.6" width="79.95" height="92.2" fill="#2e2e2e" rx="1.2"/>
<path d="M279.3 238.6 h77.55 a1.2 1.2 0 0 1 1.2 1.2 V244.6 H278.1 V239.8 a1.2 1.2 0 0 1 1.2 -1.2z" fill="#7a4a22"/>
<path d="M281.5 240.4 l1.2 1.3 l1.2 -1.3" fill="none" stroke="#d8d8d8" stroke-width="0.55"/>
<text transform="translate(286.7 242.35) scale(0.71 1)" font-size="4.6" fill="#ececec" text-anchor="start" stroke="#ececec" stroke-width="0.14">Roughness</text>
<text transform="translate(355.25 250.95) scale(0.68 1)" font-size="4.6" fill="#e2e2e2" text-anchor="end" stroke="#e2e2e2" stroke-width="0.14">Color</text>
<text transform="translate(355.25 258.15) scale(0.68 1)" font-size="4.6" fill="#e2e2e2" text-anchor="end" stroke="#e2e2e2" stroke-width="0.14">Alpha</text>
<rect x="281.8" y="263.9" width="9.6" height="5.9" fill="#282828" rx="1" stroke="#474747" stroke-width="0.4"/>
<path d="M283.3 264.8 V268.9 M283.3 264.8 H287.9" fill="none" stroke="#d8d8d8" stroke-width="0.8"/>
<path d="M283.6 269 h2.2 v-1.2 a1 1 0 0 0 -2.2 0z" fill="#e8e8e8"/>
<circle cx="286.2" cy="266.2" r="0.45" fill="#bbb"/>
<path d="M288.4 266.5 l0.8 0.8 l0.8 -0.8" fill="none" stroke="#c8c8c8" stroke-width="0.4"/>
<rect x="292.2" y="263.9" width="35.4" height="5.9" fill="#1c1c1c" rx="0.8"/>
<text transform="translate(294 268.5) scale(0.68 1)" font-size="4.6" fill="#dcdcdc" text-anchor="start" stroke="#dcdcdc" stroke-width="0.14">Mat_3_Roughness.png</text>
<rect x="328.4" y="263.9" width="5.9" height="5.9" fill="#444444" rx="0.6"/>
<rect x="335" y="263.9" width="5.9" height="5.9" fill="#444444" rx="0.6"/>
<rect x="342" y="263.9" width="5.9" height="5.9" fill="#444444" rx="0.6"/>
<rect x="349" y="263.9" width="5.9" height="5.9" fill="#444444" rx="0.6"/>
<path d="M330 265.1 h2.8 v1.8 q0 1.6 -1.4 2.2 q-1.4 -0.6 -1.4 -2.2z" fill="none" stroke="#a8a8a8" stroke-width="0.45"/>
<path d="M336.7 265.4 v3.3 h2.6 v-2.4 l-0.9 -0.9z M337.4 264.8 q1 -0.8 2.2 0.2" fill="none" stroke="#a8a8a8" stroke-width="0.45"/>
<path d="M343.4 265.2 h1.6 l0.5 0.6 h2 v3.1 h-4.1z" fill="#eeeeee"/>
<path d="M350.9 265.75 l2.2 2.2 M353.1 265.75 l-2.2 2.2" stroke="#9a9a9a" stroke-width="0.45"/>
<rect x="281.8" y="272.1" width="73.4" height="6" fill="#282828" rx="1" stroke="#474747" stroke-width="0.4"/>
<text transform="translate(283.6 276.75) scale(0.68 1)" font-size="4.6" fill="#e0e0e0" text-anchor="start" stroke="#e0e0e0" stroke-width="0.14">Linear</text>
<path d="M351.9 274.8 l0.8 0.8 l0.8 -0.8" fill="none" stroke="#e0e0e0" stroke-width="0.4"/>
<rect x="281.8" y="280.5" width="73.4" height="6" fill="#282828" rx="1" stroke="#474747" stroke-width="0.4"/>
<text transform="translate(283.6 285.15) scale(0.68 1)" font-size="4.6" fill="#e0e0e0" text-anchor="start" stroke="#e0e0e0" stroke-width="0.14">Flat</text>
<path d="M351.9 283.2 l0.8 0.8 l0.8 -0.8" fill="none" stroke="#e0e0e0" stroke-width="0.4"/>
<rect x="281.8" y="289" width="73.4" height="6" fill="#282828" rx="1" stroke="#474747" stroke-width="0.4"/>
<text transform="translate(283.6 293.65) scale(0.68 1)" font-size="4.6" fill="#e0e0e0" text-anchor="start" stroke="#e0e0e0" stroke-width="0.14">Repeat</text>
<path d="M351.9 291.7 l0.8 0.8 l0.8 -0.8" fill="none" stroke="#e0e0e0" stroke-width="0.4"/>
<rect x="281.8" y="297.5" width="73.4" height="6" fill="#282828" rx="1" stroke="#474747" stroke-width="0.4"/>
<text transform="translate(283.6 302.15) scale(0.68 1)" font-size="4.6" fill="#e0e0e0" text-anchor="start" stroke="#e0e0e0" stroke-width="0.14">Single Image</text>
<path d="M351.9 300.2 l0.8 0.8 l0.8 -0.8" fill="none" stroke="#e0e0e0" stroke-width="0.4"/>
<text transform="translate(282.5 310.25) scale(0.68 1)" font-size="4.6" fill="#e2e2e2" text-anchor="start" stroke="#e2e2e2" stroke-width="0.14">ColorSpace</text>
<rect x="307" y="305.6" width="48.2" height="6" fill="#282828" rx="1" stroke="#474747" stroke-width="0.4"/>
<text transform="translate(308.8 310.25) scale(0.68 1)" font-size="4.6" fill="#e0e0e0" text-anchor="start" stroke="#e0e0e0" stroke-width="0.14">Non-Color</text>
<path d="M351.9 308.3 l0.8 0.8 l0.8 -0.8" fill="none" stroke="#e0e0e0" stroke-width="0.4"/>
<text transform="translate(282.5 318.85) scale(0.68 1)" font-size="4.6" fill="#6a6a6a" text-anchor="start" stroke="#6a6a6a" stroke-width="0.14">Alpha</text>
<rect x="307" y="314.2" width="48.2" height="6" fill="#2b2b2b" rx="1" stroke="#363636" stroke-width="0.4"/>
<text transform="translate(308.8 318.85) scale(0.68 1)" font-size="4.6" fill="#6a6a6a" text-anchor="start" stroke="#6a6a6a" stroke-width="0.14">Straight</text>
<path d="M351.9 316.9 l0.8 0.8 l0.8 -0.8" fill="none" stroke="#6a6a6a" stroke-width="0.4"/>
<text transform="translate(282.5 327.65) scale(0.68 1)" font-size="4.6" fill="#e2e2e2" text-anchor="start" stroke="#e2e2e2" stroke-width="0.14">Vector</text>
<rect x="276.75" y="331.85" width="82.65" height="94.9" fill="#cc540f" rx="2.4"/>
<rect x="278.1" y="333.2" width="79.95" height="92.2" fill="#2e2e2e" rx="1.2"/>
<path d="M279.3 333.2 h77.55 a1.2 1.2 0 0 1 1.2 1.2 V339.2 H278.1 V334.4 a1.2 1.2 0 0 1 1.2 -1.2z" fill="#7a4a22"/>
<path d="M281.5 335 l1.2 1.3 l1.2 -1.3" fill="none" stroke="#d8d8d8" stroke-width="0.55"/>
<text transform="translate(286.7 336.95) scale(0.71 1)" font-size="4.6" fill="#ececec" text-anchor="start" stroke="#ececec" stroke-width="0.14">Normal</text>
<text transform="translate(355.25 345.55) scale(0.68 1)" font-size="4.6" fill="#e2e2e2" text-anchor="end" stroke="#e2e2e2" stroke-width="0.14">Color</text>
<text transform="translate(355.25 352.75) scale(0.68 1)" font-size="4.6" fill="#e2e2e2" text-anchor="end" stroke="#e2e2e2" stroke-width="0.14">Alpha</text>
<rect x="281.8" y="358.5" width="9.6" height="5.9" fill="#282828" rx="1" stroke="#474747" stroke-width="0.4"/>
<path d="M283.3 359.4 V363.5 M283.3 359.4 H287.9" fill="none" stroke="#d8d8d8" stroke-width="0.8"/>
<path d="M283.6 363.6 h2.2 v-1.2 a1 1 0 0 0 -2.2 0z" fill="#e8e8e8"/>
<circle cx="286.2" cy="360.8" r="0.45" fill="#bbb"/>
<path d="M288.4 361.1 l0.8 0.8 l0.8 -0.8" fill="none" stroke="#c8c8c8" stroke-width="0.4"/>
<rect x="292.2" y="358.5" width="35.4" height="5.9" fill="#1c1c1c" rx="0.8"/>
<text transform="translate(294 363.1) scale(0.68 1)" font-size="4.6" fill="#dcdcdc" text-anchor="start" stroke="#dcdcdc" stroke-width="0.14">Mat_3_Normal_Open...</text>
<rect x="328.4" y="358.5" width="5.9" height="5.9" fill="#444444" rx="0.6"/>
<rect x="335" y="358.5" width="5.9" height="5.9" fill="#444444" rx="0.6"/>
<rect x="342" y="358.5" width="5.9" height="5.9" fill="#444444" rx="0.6"/>
<rect x="349" y="358.5" width="5.9" height="5.9" fill="#444444" rx="0.6"/>
<path d="M330 359.7 h2.8 v1.8 q0 1.6 -1.4 2.2 q-1.4 -0.6 -1.4 -2.2z" fill="none" stroke="#a8a8a8" stroke-width="0.45"/>
<path d="M336.7 360 v3.3 h2.6 v-2.4 l-0.9 -0.9z M337.4 359.4 q1 -0.8 2.2 0.2" fill="none" stroke="#a8a8a8" stroke-width="0.45"/>
<path d="M343.4 359.8 h1.6 l0.5 0.6 h2 v3.1 h-4.1z" fill="#eeeeee"/>
<path d="M350.9 360.35 l2.2 2.2 M353.1 360.35 l-2.2 2.2" stroke="#9a9a9a" stroke-width="0.45"/>
<rect x="281.8" y="366.7" width="73.4" height="6" fill="#282828" rx="1" stroke="#474747" stroke-width="0.4"/>
<text transform="translate(283.6 371.35) scale(0.68 1)" font-size="4.6" fill="#e0e0e0" text-anchor="start" stroke="#e0e0e0" stroke-width="0.14">Linear</text>
<path d="M351.9 369.4 l0.8 0.8 l0.8 -0.8" fill="none" stroke="#e0e0e0" stroke-width="0.4"/>
<rect x="281.8" y="375.1" width="73.4" height="6" fill="#282828" rx="1" stroke="#474747" stroke-width="0.4"/>
<text transform="translate(283.6 379.75) scale(0.68 1)" font-size="4.6" fill="#e0e0e0" text-anchor="start" stroke="#e0e0e0" stroke-width="0.14">Flat</text>
<path d="M351.9 377.8 l0.8 0.8 l0.8 -0.8" fill="none" stroke="#e0e0e0" stroke-width="0.4"/>
<rect x="281.8" y="383.6" width="73.4" height="6" fill="#282828" rx="1" stroke="#474747" stroke-width="0.4"/>
<text transform="translate(283.6 388.25) scale(0.68 1)" font-size="4.6" fill="#e0e0e0" text-anchor="start" stroke="#e0e0e0" stroke-width="0.14">Repeat</text>
<path d="M351.9 386.3 l0.8 0.8 l0.8 -0.8" fill="none" stroke="#e0e0e0" stroke-width="0.4"/>
<rect x="281.8" y="392.1" width="73.4" height="6" fill="#282828" rx="1" stroke="#474747" stroke-width="0.4"/>
<text transform="translate(283.6 396.75) scale(0.68 1)" font-size="4.6" fill="#e0e0e0" text-anchor="start" stroke="#e0e0e0" stroke-width="0.14">Single Image</text>
<path d="M351.9 394.8 l0.8 0.8 l0.8 -0.8" fill="none" stroke="#e0e0e0" stroke-width="0.4"/>
<text transform="translate(282.5 404.85) scale(0.68 1)" font-size="4.6" fill="#e2e2e2" text-anchor="start" stroke="#e2e2e2" stroke-width="0.14">ColorSpace</text>
<rect x="307" y="400.2" width="48.2" height="6" fill="#282828" rx="1" stroke="#474747" stroke-width="0.4"/>
<text transform="translate(308.8 404.85) scale(0.68 1)" font-size="4.6" fill="#e0e0e0" text-anchor="start" stroke="#e0e0e0" stroke-width="0.14">Non-Color</text>
<path d="M351.9 402.9 l0.8 0.8 l0.8 -0.8" fill="none" stroke="#e0e0e0" stroke-width="0.4"/>
<text transform="translate(282.5 413.45) scale(0.68 1)" font-size="4.6" fill="#6a6a6a" text-anchor="start" stroke="#6a6a6a" stroke-width="0.14">Alpha</text>
<rect x="307" y="408.8" width="48.2" height="6" fill="#2b2b2b" rx="1" stroke="#363636" stroke-width="0.4"/>
<text transform="translate(308.8 413.45) scale(0.68 1)" font-size="4.6" fill="#6a6a6a" text-anchor="start" stroke="#6a6a6a" stroke-width="0.14">Straight</text>
<path d="M351.9 411.5 l0.8 0.8 l0.8 -0.8" fill="none" stroke="#6a6a6a" stroke-width="0.4"/>
<text transform="translate(282.5 422.25) scale(0.68 1)" font-size="4.6" fill="#e2e2e2" text-anchor="start" stroke="#e2e2e2" stroke-width="0.14">Vector</text>
<rect x="378.7" y="331.85" width="51.65" height="52.25" fill="#cc540f" rx="2.4"/>
<rect x="380.05" y="333.2" width="48.95" height="49.55" fill="#2e2e2e" rx="1.2"/>
<path d="M381.25 333.2 h46.55 a1.2 1.2 0 0 1 1.2 1.2 V339 H380.05 V334.4 a1.2 1.2 0 0 1 1.2 -1.2z" fill="#3f3ca0"/>
<path d="M383.45 334.9 l1.2 1.3 l1.2 -1.3" fill="none" stroke="#d8d8d8" stroke-width="0.55"/>
<text transform="translate(388.65 336.85) scale(0.71 1)" font-size="4.6" fill="#ececec" text-anchor="start" stroke="#ececec" stroke-width="0.14">Normal Map</text>
<text transform="translate(426.4 345.45) scale(0.68 1)" font-size="4.6" fill="#e2e2e2" text-anchor="end" stroke="#e2e2e2" stroke-width="0.14">Normal</text>
<rect x="383.2" y="351.3" width="42.4" height="5.3" fill="#282828" rx="1" stroke="#474747" stroke-width="0.4"/>
<text transform="translate(385 355.6) scale(0.68 1)" font-size="4.6" fill="#e0e0e0" text-anchor="start" stroke="#e0e0e0" stroke-width="0.14">Tangent Space</text>
<path d="M422.3 353.65 l0.8 0.8 l0.8 -0.8" fill="none" stroke="#e0e0e0" stroke-width="0.4"/>
<rect x="383.2" y="359.6" width="42.4" height="5.8" fill="#1c1c1c" rx="0.8"/>
<text transform="translate(385 364.15) scale(0.68 1)" font-size="4.6" fill="#d0d0d0" text-anchor="start" stroke="#d0d0d0" stroke-width="0.14">•</text>
<rect x="383.2" y="368.3" width="42.4" height="5.3" fill="#4a4a4a" rx="1"/>
<text transform="translate(387.4 372.6) scale(0.68 1)" font-size="4.6" fill="#dcdcdc" text-anchor="start" stroke="#dcdcdc" stroke-width="0.14">Strength</text>
<text transform="translate(421.8 372.6) scale(0.68 1)" font-size="4.6" fill="#dcdcdc" text-anchor="end" stroke="#dcdcdc" stroke-width="0.14">1.000</text>
<text transform="translate(382.65 380.15) scale(0.68 1)" font-size="4.6" fill="#e2e2e2" text-anchor="start" stroke="#e2e2e2" stroke-width="0.14">Color</text>
<rect x="462.5" y="114.7" width="82.9" height="225.1" fill="#151515" rx="2.4" opacity="0.8"/>
<rect x="463.7" y="115.9" width="80.5" height="222.7" fill="#2e2e2e" rx="1.2"/>
<path d="M464.9 115.9 h78.1 a1.2 1.2 0 0 1 1.2 1.2 V122.3 H463.7 V117.1 a1.2 1.2 0 0 1 1.2 -1.2z" fill="#287028"/>
<path d="M467.1 117.9 l1.2 1.3 l1.2 -1.3" fill="none" stroke="#d8d8d8" stroke-width="0.55"/>
<text transform="translate(472.3 119.85) scale(0.67 1)" font-size="4.6" fill="#ececec" text-anchor="start" stroke="#ececec" stroke-width="0.14">Principled BSDF</text>
<text transform="translate(541.2 128.75) scale(0.68 1)" font-size="4.6" fill="#e2e2e2" text-anchor="end" stroke="#e2e2e2" stroke-width="0.14">BSDF</text>
<rect x="467.6" y="134.2" width="73.5" height="5.7" fill="#282828" rx="1" stroke="#474747" stroke-width="0.4"/>
<text transform="translate(469.4 138.7) scale(0.68 1)" font-size="4.6" fill="#e0e0e0" text-anchor="start" stroke="#e0e0e0" stroke-width="0.14">GGX</text>
<path d="M537.8 136.75 l0.8 0.8 l0.8 -0.8" fill="none" stroke="#e0e0e0" stroke-width="0.4"/>
<rect x="467.6" y="143.3" width="73.5" height="5.8" fill="#282828" rx="1" stroke="#474747" stroke-width="0.4"/>
<text transform="translate(469.4 147.85) scale(0.68 1)" font-size="4.6" fill="#e0e0e0" text-anchor="start" stroke="#e0e0e0" stroke-width="0.14">Random Walk</text>
<path d="M537.8 145.9 l0.8 0.8 l0.8 -0.8" fill="none" stroke="#e0e0e0" stroke-width="0.4"/>
<text transform="translate(467.6 155.75) scale(0.68 1)" font-size="4.6" fill="#e2e2e2" text-anchor="start" stroke="#e2e2e2" stroke-width="0.14">Base Color</text>
<rect x="467.6" y="158.6" width="73.5" height="6" fill="#4a4a4a" rx="1"/>
<text transform="translate(471.8 163.25) scale(0.68 1)" font-size="4.6" fill="#dcdcdc" text-anchor="start" stroke="#dcdcdc" stroke-width="0.14">Subsurface</text>
<text transform="translate(537.3 163.25) scale(0.68 1)" font-size="4.6" fill="#dcdcdc" text-anchor="end" stroke="#dcdcdc" stroke-width="0.14">0.000</text>
<rect x="467.6" y="166.3" width="73.5" height="5.7" fill="#282828" rx="1" stroke="#474747" stroke-width="0.4"/>
<text transform="translate(469.4 170.8) scale(0.68 1)" font-size="4.6" fill="#e0e0e0" text-anchor="start" stroke="#e0e0e0" stroke-width="0.14">Subsurface Radius</text>
<path d="M537.8 168.85 l0.8 0.8 l0.8 -0.8" fill="none" stroke="#e0e0e0" stroke-width="0.4"/>
<text transform="translate(467.6 177.85) scale(0.68 1)" font-size="4.6" fill="#e2e2e2" text-anchor="start" stroke="#e2e2e2" stroke-width="0.14">Subsurface Color</text>
<rect x="498.9" y="174" width="42.2" height="5" fill="#f0f0f0" rx="0.8"/>
<rect x="467.6" y="181.3" width="73.5" height="6" fill="#4a4a4a" rx="1"/>
<path d="M468.6 181.3 h7.09 v6 h-7.09 a1 1 0 0 1 -1 -1 v-4 a1 1 0 0 1 1 -1z" fill="#4772b3"/>
<text transform="translate(471.8 185.95) scale(0.68 1)" font-size="4.6" fill="#dcdcdc" text-anchor="start" stroke="#dcdcdc" stroke-width="0.14">Subsurface IOR</text>
<text transform="translate(537.3 185.95) scale(0.68 1)" font-size="4.6" fill="#dcdcdc" text-anchor="end" stroke="#dcdcdc" stroke-width="0.14">1.400</text>
<rect x="467.6" y="188.7" width="73.5" height="6" fill="#4a4a4a" rx="1"/>
<text transform="translate(471.8 193.35) scale(0.68 1)" font-size="4.6" fill="#dcdcdc" text-anchor="start" stroke="#dcdcdc" stroke-width="0.14">Subsurface Anisotropy</text>
<text transform="translate(537.3 193.35) scale(0.68 1)" font-size="4.6" fill="#dcdcdc" text-anchor="end" stroke="#dcdcdc" stroke-width="0.14">0.000</text>
<text transform="translate(467.6 200.35) scale(0.68 1)" font-size="4.6" fill="#e2e2e2" text-anchor="start" stroke="#e2e2e2" stroke-width="0.14">Metallic</text>
<rect x="467.6" y="203.5" width="73.5" height="6" fill="#4a4a4a" rx="1"/>
<path d="M468.6 203.5 h35.02 v6 h-35.02 a1 1 0 0 1 -1 -1 v-4 a1 1 0 0 1 1 -1z" fill="#4772b3"/>
<text transform="translate(471.8 208.15) scale(0.68 1)" font-size="4.6" fill="#dcdcdc" text-anchor="start" stroke="#dcdcdc" stroke-width="0.14">Specular</text>
<text transform="translate(537.3 208.15) scale(0.68 1)" font-size="4.6" fill="#dcdcdc" text-anchor="end" stroke="#dcdcdc" stroke-width="0.14">0.500</text>
<rect x="467.6" y="211.1" width="73.5" height="6" fill="#4a4a4a" rx="1"/>
<text transform="translate(471.8 215.75) scale(0.68 1)" font-size="4.6" fill="#dcdcdc" text-anchor="start" stroke="#dcdcdc" stroke-width="0.14">Specular Tint</text>
<text transform="translate(537.3 215.75) scale(0.68 1)" font-size="4.6" fill="#dcdcdc" text-anchor="end" stroke="#dcdcdc" stroke-width="0.14">0.000</text>
<text transform="translate(467.6 222.65) scale(0.68 1)" font-size="4.6" fill="#e2e2e2" text-anchor="start" stroke="#e2e2e2" stroke-width="0.14">Roughness</text>
<rect x="467.6" y="225.6" width="73.5" height="6" fill="#4a4a4a" rx="1"/>
<text transform="translate(471.8 230.25) scale(0.68 1)" font-size="4.6" fill="#dcdcdc" text-anchor="start" stroke="#dcdcdc" stroke-width="0.14">Anisotropic</text>
<text transform="translate(537.3 230.25) scale(0.68 1)" font-size="4.6" fill="#dcdcdc" text-anchor="end" stroke="#dcdcdc" stroke-width="0.14">0.000</text>
<rect x="467.6" y="233.1" width="73.5" height="6" fill="#4a4a4a" rx="1"/>
<text transform="translate(471.8 237.75) scale(0.68 1)" font-size="4.6" fill="#dcdcdc" text-anchor="start" stroke="#dcdcdc" stroke-width="0.14">Anisotropic Rotation</text>
<text transform="translate(537.3 237.75) scale(0.68 1)" font-size="4.6" fill="#dcdcdc" text-anchor="end" stroke="#dcdcdc" stroke-width="0.14">0.000</text>
<rect x="467.6" y="240.5" width="73.5" height="6" fill="#4a4a4a" rx="1"/>
<text transform="translate(471.8 245.15) scale(0.68 1)" font-size="4.6" fill="#dcdcdc" text-anchor="start" stroke="#dcdcdc" stroke-width="0.14">Sheen</text>
<text transform="translate(537.3 245.15) scale(0.68 1)" font-size="4.6" fill="#dcdcdc" text-anchor="end" stroke="#dcdcdc" stroke-width="0.14">0.000</text>
<rect x="467.6" y="247.9" width="73.5" height="6" fill="#4a4a4a" rx="1"/>
<path d="M468.6 247.9 h35.02 v6 h-35.02 a1 1 0 0 1 -1 -1 v-4 a1 1 0 0 1 1 -1z" fill="#4772b3"/>
<text transform="translate(471.8 252.55) scale(0.68 1)" font-size="4.6" fill="#dcdcdc" text-anchor="start" stroke="#dcdcdc" stroke-width="0.14">Sheen Tint</text>
<text transform="translate(537.3 252.55) scale(0.68 1)" font-size="4.6" fill="#dcdcdc" text-anchor="end" stroke="#dcdcdc" stroke-width="0.14">0.500</text>
<rect x="467.6" y="255.2" width="73.5" height="6" fill="#4a4a4a" rx="1"/>
<text transform="translate(471.8 259.85) scale(0.68 1)" font-size="4.6" fill="#dcdcdc" text-anchor="start" stroke="#dcdcdc" stroke-width="0.14">Clearcoat</text>
<text transform="translate(537.3 259.85) scale(0.68 1)" font-size="4.6" fill="#dcdcdc" text-anchor="end" stroke="#dcdcdc" stroke-width="0.14">0.000</text>
<rect x="467.6" y="262.9" width="73.5" height="6" fill="#4a4a4a" rx="1"/>
<path d="M468.6 262.9 h1.21 v6 h-1.21 a1 1 0 0 1 -1 -1 v-4 a1 1 0 0 1 1 -1z" fill="#4772b3"/>
<text transform="translate(471.8 267.55) scale(0.68 1)" font-size="4.6" fill="#dcdcdc" text-anchor="start" stroke="#dcdcdc" stroke-width="0.14">Clearcoat Roughness</text>
<text transform="translate(537.3 267.55) scale(0.68 1)" font-size="4.6" fill="#dcdcdc" text-anchor="end" stroke="#dcdcdc" stroke-width="0.14">0.030</text>
<rect x="467.6" y="270.1" width="73.5" height="6" fill="#4a4a4a" rx="1"/>
<text transform="translate(471.8 274.75) scale(0.68 1)" font-size="4.6" fill="#dcdcdc" text-anchor="start" stroke="#dcdcdc" stroke-width="0.14">IOR</text>
<text transform="translate(537.3 274.75) scale(0.68 1)" font-size="4.6" fill="#dcdcdc" text-anchor="end" stroke="#dcdcdc" stroke-width="0.14">1.450</text>
<rect x="467.6" y="277.6" width="73.5" height="6" fill="#4a4a4a" rx="1"/>
<text transform="translate(471.8 282.25) scale(0.68 1)" font-size="4.6" fill="#dcdcdc" text-anchor="start" stroke="#dcdcdc" stroke-width="0.14">Transmission</text>
<text transform="translate(537.3 282.25) scale(0.68 1)" font-size="4.6" fill="#dcdcdc" text-anchor="end" stroke="#dcdcdc" stroke-width="0.14">0.000</text>
<rect x="467.6" y="285.4" width="73.5" height="6" fill="#4a4a4a" rx="1"/>
<text transform="translate(471.8 290.05) scale(0.68 1)" font-size="4.6" fill="#dcdcdc" text-anchor="start" stroke="#dcdcdc" stroke-width="0.14">Transmission Roughness</text>
<text transform="translate(537.3 290.05) scale(0.68 1)" font-size="4.6" fill="#dcdcdc" text-anchor="end" stroke="#dcdcdc" stroke-width="0.14">0.000</text>
<text transform="translate(467.6 297.45) scale(0.68 1)" font-size="4.6" fill="#e2e2e2" text-anchor="start" stroke="#e2e2e2" stroke-width="0.14">Emission</text>
<rect x="499.4" y="293.2" width="41.6" height="5.4" fill="#000000" rx="0.8"/>
<rect x="467.6" y="300.2" width="73.5" height="6" fill="#4a4a4a" rx="1"/>
<text transform="translate(471.8 304.85) scale(0.68 1)" font-size="4.6" fill="#dcdcdc" text-anchor="start" stroke="#dcdcdc" stroke-width="0.14">Emission Strength</text>
<text transform="translate(537.3 304.85) scale(0.68 1)" font-size="4.6" fill="#dcdcdc" text-anchor="end" stroke="#dcdcdc" stroke-width="0.14">1.000</text>
<rect x="467.6" y="307.9" width="73.5" height="6" fill="#4a4a4a" rx="1"/>
<rect x="467.6" y="307.9" width="73.5" height="6" fill="#4772b3" rx="1"/>
<text transform="translate(471.8 312.55) scale(0.68 1)" font-size="4.6" fill="#dcdcdc" text-anchor="start" stroke="#dcdcdc" stroke-width="0.14">Alpha</text>
<text transform="translate(537.3 312.55) scale(0.68 1)" font-size="4.6" fill="#dcdcdc" text-anchor="end" stroke="#dcdcdc" stroke-width="0.14">1.000</text>
<text transform="translate(467.6 319.45) scale(0.68 1)" font-size="4.6" fill="#e2e2e2" text-anchor="start" stroke="#e2e2e2" stroke-width="0.14">Normal</text>
<text transform="translate(467.6 326.95) scale(0.68 1)" font-size="4.6" fill="#e2e2e2" text-anchor="start" stroke="#e2e2e2" stroke-width="0.14">Clearcoat Normal</text>
<text transform="translate(467.6 334.25) scale(0.68 1)" font-size="4.6" fill="#e2e2e2" text-anchor="start" stroke="#e2e2e2" stroke-width="0.14">Tangent</text>
<rect x="560.5" y="114.8" width="48.9" height="43" fill="#151515" rx="2.4" opacity="0.8"/>
<rect x="561.7" y="116" width="46.5" height="40.6" fill="#2e2e2e" rx="1.2"/>
<path d="M562.9 116 h44.1 a1.2 1.2 0 0 1 1.2 1.2 V122.5 H561.7 V117.2 a1.2 1.2 0 0 1 1.2 -1.2z" fill="#4b1a2a"/>
<path d="M565.1 118.05 l1.2 1.3 l1.2 -1.3" fill="none" stroke="#d8d8d8" stroke-width="0.55"/>
<text transform="translate(570.3 120) scale(0.67 1)" font-size="4.6" fill="#ececec" text-anchor="start" stroke="#ececec" stroke-width="0.14">Material Output</text>
<rect x="565.8" y="124.9" width="39.7" height="5.4" fill="#282828" rx="1" stroke="#474747" stroke-width="0.4"/>
<text transform="translate(567.6 129.25) scale(0.68 1)" font-size="4.6" fill="#e0e0e0" text-anchor="start" stroke="#e0e0e0" stroke-width="0.14">All</text>
<path d="M602.2 127.3 l0.8 0.8 l0.8 -0.8" fill="none" stroke="#e0e0e0" stroke-width="0.4"/>
<text transform="translate(566 137.25) scale(0.68 1)" font-size="4.6" fill="#e2e2e2" text-anchor="start" stroke="#e2e2e2" stroke-width="0.14">Surface</text>
<text transform="translate(566 144.65) scale(0.68 1)" font-size="4.6" fill="#e2e2e2" text-anchor="start" stroke="#e2e2e2" stroke-width="0.14">Volume</text>
<text transform="translate(566 152.05) scale(0.68 1)" font-size="4.6" fill="#e2e2e2" text-anchor="start" stroke="#e2e2e2" stroke-width="0.14">Displacement</text>
<path d="M88.5 142.24 C96.58 142.24 100.62 146 108.7 146" fill="none" stroke="#181818" stroke-opacity="0.4" stroke-width="2.7"/>
<path d="M88.5 142.24 C96.58 142.24 100.62 146 108.7 146" fill="none" stroke="#c4c4e6" stroke-width="1.7"/>
<path d="M156 127.5 C198.12 127.5 219.18 236 261.3 236" fill="none" stroke="#181818" stroke-opacity="0.4" stroke-width="2.7"/>
<path d="M156 127.5 C198.12 127.5 219.18 236 261.3 236" fill="none" stroke="#c4c4e6" stroke-width="1.7"/>
<path d="M261.3 236 C267.78 236 271.02 136.3 277.5 136.3" fill="none" stroke="#181818" stroke-opacity="0.4" stroke-width="2.7"/>
<path d="M261.3 236 C267.78 236 271.02 136.3 277.5 136.3" fill="none" stroke="#c4c4e6" stroke-width="1.7"/>
<path d="M261.3 236 C267.78 236 271.02 231.3 277.5 231.3" fill="none" stroke="#181818" stroke-opacity="0.4" stroke-width="2.7"/>
<path d="M261.3 236 C267.78 236 271.02 231.3 277.5 231.3" fill="none" stroke="#c4c4e6" stroke-width="1.7"/>
<path d="M261.3 236 C267.78 236 271.02 326 277.5 326" fill="none" stroke="#181818" stroke-opacity="0.4" stroke-width="2.7"/>
<path d="M261.3 236 C267.78 236 271.02 326 277.5 326" fill="none" stroke="#c4c4e6" stroke-width="1.7"/>
<path d="M261.3 236 C267.78 236 271.02 420.6 277.5 420.6" fill="none" stroke="#181818" stroke-opacity="0.4" stroke-width="2.7"/>
<path d="M261.3 236 C267.78 236 271.02 420.6 277.5 420.6" fill="none" stroke="#c4c4e6" stroke-width="1.7"/>
<path d="M358.75 59.6 C400.73 59.6 421.72 154.1 463.7 154.1" fill="none" stroke="#181818" stroke-opacity="0.4" stroke-width="2.7"/>
<path d="M358.75 59.6 C400.73 59.6 421.72 154.1 463.7 154.1" fill="none" stroke="#d4d4a8" stroke-width="1.7"/>
<path d="M358.75 154.6 C400.73 154.6 421.72 198.7 463.7 198.7" fill="none" stroke="#181818" stroke-opacity="0.4" stroke-width="2.7"/>
<defs><linearGradient id="g1" gradientUnits="userSpaceOnUse" x1="358.75" y1="0" x2="463.7" y2="0"><stop offset="0" stop-color="#d4d4a8"/><stop offset="1" stop-color="#d2d2d2"/></linearGradient></defs>
<path d="M358.75 154.6 C400.73 154.6 421.72 198.7 463.7 198.7" fill="none" stroke="url(#g1)" stroke-width="1.7"/>
<path d="M358.75 249.3 C400.73 249.3 421.72 221 463.7 221" fill="none" stroke="#181818" stroke-opacity="0.4" stroke-width="2.7"/>
<defs><linearGradient id="g2" gradientUnits="userSpaceOnUse" x1="358.75" y1="0" x2="463.7" y2="0"><stop offset="0" stop-color="#d4d4a8"/><stop offset="1" stop-color="#d2d2d2"/></linearGradient></defs>
<path d="M358.75 249.3 C400.73 249.3 421.72 221 463.7 221" fill="none" stroke="url(#g2)" stroke-width="1.7"/>
<path d="M358.75 343.9 C366.99 343.9 371.11 378.5 379.35 378.5" fill="none" stroke="#181818" stroke-opacity="0.4" stroke-width="2.7"/>
<path d="M358.75 343.9 C366.99 343.9 371.11 378.5 379.35 378.5" fill="none" stroke="#d4d4a8" stroke-width="1.7"/>
<path d="M429.8 343.8 C443.36 343.8 450.14 317.8 463.7 317.8" fill="none" stroke="#181818" stroke-opacity="0.4" stroke-width="2.7"/>
<path d="M429.8 343.8 C443.36 343.8 450.14 317.8 463.7 317.8" fill="none" stroke="#c4c4e6" stroke-width="1.7"/>
<path d="M544.2 127.1 C551.2 127.1 554.7 135.6 561.7 135.6" fill="none" stroke="#181818" stroke-opacity="0.4" stroke-width="2.7"/>
<path d="M544.2 127.1 C551.2 127.1 554.7 135.6 561.7 135.6" fill="none" stroke="#58c058" stroke-width="1.7"/>
<circle cx="261.3" cy="236" r="1.6" fill="#7070d0" stroke="#e0e0f0" stroke-width="0.5"/>
<circle cx="88.5" cy="127.3" r="1.15" fill="#6868d0" stroke="#101010" stroke-width="0.35"/>
<circle cx="88.5" cy="134.77" r="1.15" fill="#6868d0" stroke="#101010" stroke-width="0.35"/>
<circle cx="88.5" cy="142.24" r="1.15" fill="#6868d0" stroke="#101010" stroke-width="0.35"/>
<circle cx="88.5" cy="149.71" r="1.15" fill="#6868d0" stroke="#101010" stroke-width="0.35"/>
<circle cx="88.5" cy="157.18" r="1.15" fill="#6868d0" stroke="#101010" stroke-width="0.35"/>
<circle cx="88.5" cy="164.65" r="1.15" fill="#6868d0" stroke="#101010" stroke-width="0.35"/>
<circle cx="88.5" cy="172.12" r="1.15" fill="#6868d0" stroke="#101010" stroke-width="0.35"/>
<circle cx="156" cy="127.5" r="1.15" fill="#6868d0" stroke="#101010" stroke-width="0.35"/>
<circle cx="108.7" cy="146" r="1.15" fill="#6868d0" stroke="#101010" stroke-width="0.35"/>
<circle cx="108.7" cy="153.2" r="1.15" fill="#6868d0" stroke="#101010" stroke-width="0.35"/>
<circle cx="108.7" cy="181" r="1.15" fill="#6868d0" stroke="#101010" stroke-width="0.35"/>
<circle cx="108.7" cy="208.6" r="1.15" fill="#6868d0" stroke="#101010" stroke-width="0.35"/>
<circle cx="358.75" cy="59.6" r="1.15" fill="#c8c828" stroke="#101010" stroke-width="0.35"/>
<circle cx="358.75" cy="66.8" r="1.15" fill="#a0a0a0" stroke="#101010" stroke-width="0.35"/>
<circle cx="277.5" cy="136.3" r="1.15" fill="#6868d0" stroke="#101010" stroke-width="0.35"/>
<circle cx="358.75" cy="154.6" r="1.15" fill="#c8c828" stroke="#101010" stroke-width="0.35"/>
<circle cx="358.75" cy="161.8" r="1.15" fill="#a0a0a0" stroke="#101010" stroke-width="0.35"/>
<circle cx="277.5" cy="231.3" r="1.15" fill="#6868d0" stroke="#101010" stroke-width="0.35"/>
<circle cx="358.75" cy="249.3" r="1.15" fill="#c8c828" stroke="#101010" stroke-width="0.35"/>
<circle cx="358.75" cy="256.5" r="1.15" fill="#a0a0a0" stroke="#101010" stroke-width="0.35"/>
<circle cx="277.5" cy="326" r="1.15" fill="#6868d0" stroke="#101010" stroke-width="0.35"/>
<circle cx="358.75" cy="343.9" r="1.15" fill="#c8c828" stroke="#101010" stroke-width="0.35"/>
<circle cx="358.75" cy="351.1" r="1.15" fill="#a0a0a0" stroke="#101010" stroke-width="0.35"/>
<circle cx="277.5" cy="420.6" r="1.15" fill="#6868d0" stroke="#101010" stroke-width="0.35"/>
<circle cx="429.8" cy="343.8" r="1.15" fill="#6868d0" stroke="#101010" stroke-width="0.35"/>
<circle cx="379.35" cy="370.9" r="1.15" fill="#a0a0a0" stroke="#101010" stroke-width="0.35"/>
<circle cx="379.35" cy="378.5" r="1.15" fill="#c8c828" stroke="#101010" stroke-width="0.35"/>
<circle cx="544.2" cy="127.1" r="1.15" fill="#60c060" stroke="#101010" stroke-width="0.35"/>
<circle cx="463.7" cy="154.1" r="1.15" fill="#c8c828" stroke="#101010" stroke-width="0.35"/>
<circle cx="463.7" cy="161.6" r="1.15" fill="#a0a0a0" stroke="#101010" stroke-width="0.35"/>
<circle cx="463.7" cy="169.1" r="1.15" fill="#6868d0" stroke="#101010" stroke-width="0.35"/>
<circle cx="463.7" cy="176.2" r="1.15" fill="#c8c828" stroke="#101010" stroke-width="0.35"/>
<circle cx="463.7" cy="184.3" r="1.15" fill="#a0a0a0" stroke="#101010" stroke-width="0.35"/>
<circle cx="463.7" cy="191.7" r="1.15" fill="#a0a0a0" stroke="#101010" stroke-width="0.35"/>
<circle cx="463.7" cy="198.7" r="1.15" fill="#a0a0a0" stroke="#101010" stroke-width="0.35"/>
<circle cx="463.7" cy="206.5" r="1.15" fill="#a0a0a0" stroke="#101010" stroke-width="0.35"/>
<circle cx="463.7" cy="214.1" r="1.15" fill="#a0a0a0" stroke="#101010" stroke-width="0.35"/>
<circle cx="463.7" cy="221" r="1.15" fill="#a0a0a0" stroke="#101010" stroke-width="0.35"/>
<circle cx="463.7" cy="228.6" r="1.15" fill="#a0a0a0" stroke="#101010" stroke-width="0.35"/>
<circle cx="463.7" cy="236.1" r="1.15" fill="#a0a0a0" stroke="#101010" stroke-width="0.35"/>
<circle cx="463.7" cy="243.5" r="1.15" fill="#a0a0a0" stroke="#101010" stroke-width="0.35"/>
<circle cx="463.7" cy="250.9" r="1.15" fill="#a0a0a0" stroke="#101010" stroke-width="0.35"/>
<circle cx="463.7" cy="258.2" r="1.15" fill="#a0a0a0" stroke="#101010" stroke-width="0.35"/>
<circle cx="463.7" cy="265.9" r="1.15" fill="#a0a0a0" stroke="#101010" stroke-width="0.35"/>
<circle cx="463.7" cy="273.1" r="1.15" fill="#a0a0a0" stroke="#101010" stroke-width="0.35"/>
<circle cx="463.7" cy="280.6" r="1.15" fill="#a0a0a0" stroke="#101010" stroke-width="0.35"/>
<circle cx="463.7" cy="288.4" r="1.15" fill="#a0a0a0" stroke="#101010" stroke-width="0.35"/>
<circle cx="463.7" cy="295.8" r="1.15" fill="#c8c828" stroke="#101010" stroke-width="0.35"/>
<circle cx="463.7" cy="303.2" r="1.15" fill="#a0a0a0" stroke="#101010" stroke-width="0.35"/>
<circle cx="463.7" cy="310.9" r="1.15" fill="#a0a0a0" stroke="#101010" stroke-width="0.35"/>
<circle cx="463.7" cy="317.8" r="1.15" fill="#6868d0" stroke="#101010" stroke-width="0.35"/>
<circle cx="463.7" cy="325.3" r="1.15" fill="#6868d0" stroke="#101010" stroke-width="0.35"/>
<circle cx="463.7" cy="332.6" r="1.15" fill="#6868d0" stroke="#101010" stroke-width="0.35"/>
<circle cx="561.7" cy="135.6" r="1.15" fill="#60c060" stroke="#101010" stroke-width="0.35"/>
<circle cx="561.7" cy="143" r="1.15" fill="#60c060" stroke="#101010" stroke-width="0.35"/>
<circle cx="561.7" cy="150.4" r="1.15" fill="#6868d0" stroke="#101010" stroke-width="0.35"/>
</svg></body></html>
